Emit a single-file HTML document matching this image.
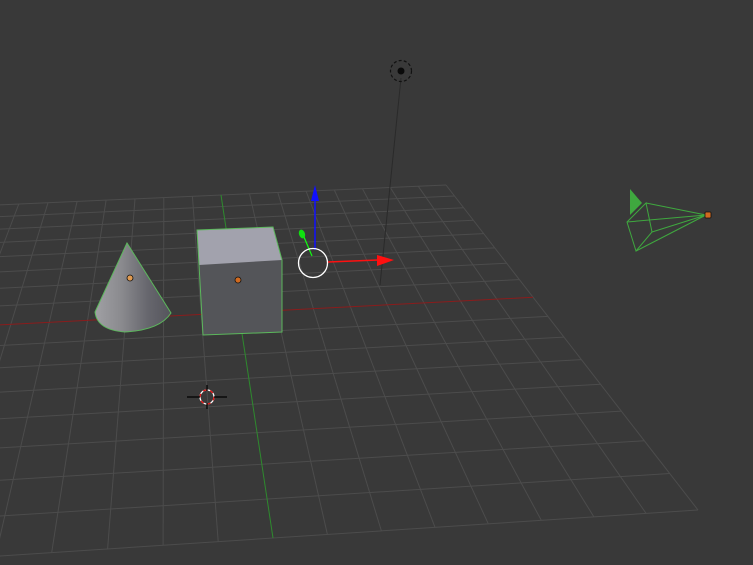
<!DOCTYPE html>
<html><head><meta charset="utf-8"><style>
html,body{margin:0;padding:0;background:#393939;width:753px;height:565px;overflow:hidden}
svg{display:block}
</style></head><body>
<svg id="s" width="753" height="565" viewBox="0 0 753 565" xmlns="http://www.w3.org/2000/svg">
<rect width="753" height="565" fill="#393939"/>
<g id="grid" stroke="#4c4c4c" stroke-width="1" fill="none"></g>
<g id="axes" fill="none"></g>
<!-- lamp line -->
<line x1="401" y1="78" x2="380" y2="285" stroke="#2a2a2a" stroke-width="1"/>
<!-- lamp -->
<circle cx="401" cy="71" r="10.5" fill="none" stroke="#111" stroke-width="1.2" stroke-dasharray="3,2.2"/>
<circle cx="401" cy="71" r="3.5" fill="#0a0a0a"/>
<!-- cone -->
<defs>
<linearGradient id="cg" x1="0" x2="1" y1="0" y2="0">
<stop offset="0" stop-color="#a0a0a4"/><stop offset="0.35" stop-color="#8a8a8e"/><stop offset="0.7" stop-color="#66666d"/><stop offset="1" stop-color="#55555c"/>
</linearGradient>
</defs>
<path d="M127,243 L95,312 Q97,330 125,332 Q160,330 171,313 Z" fill="url(#cg)" stroke="#5cb85c" stroke-width="1"/>
<circle cx="130" cy="278" r="3" fill="#e09a50" stroke="#111" stroke-width="0.8"/>
<!-- cube -->
<path d="M197,230 L273,227 L282,260 L282,332 L203,335 L199,265 Z" fill="#545559"/>
<path d="M197,230 L273,227 L282,260 L199,265 Z" fill="#a2a2ad"/>
<path d="M197,230 L273,227 L282,260 L282,332 L203,335 L199,265 Z" fill="none" stroke="#5cb85c" stroke-width="1"/>
<circle cx="238" cy="280" r="3" fill="#d06a20" stroke="#111" stroke-width="0.8"/>
<!-- manipulator -->
<line x1="315" y1="250" x2="315" y2="200" stroke="#1010ff" stroke-width="1.5"/>
<path d="M315,185 L311,201 L319,201 Z" fill="#1010ff"/>
<line x1="312" y1="256" x2="304" y2="237" stroke="#10ff10" stroke-width="1.2"/>
<ellipse cx="302" cy="234" rx="3" ry="4.5" fill="#10e010" transform="rotate(-20 302 234)"/>
<line x1="328" y1="262" x2="378" y2="260" stroke="#ff1010" stroke-width="1.5"/>
<path d="M394,260 L377,255 L377,266 Z" fill="#ff1010"/>
<circle cx="313" cy="263" r="14.5" fill="none" stroke="#fff" stroke-width="1.3"/>
<!-- camera -->
<g stroke="#3fa83f" stroke-width="1" fill="none">
<path d="M646,203 L627,222 L636,251 L652,232 Z"/>
<path d="M706,215 L646,203 M706,215 L627,222 M706,215 L636,251 M706,215 L652,232"/>
</g>
<path d="M630,189 L642,203 L630,215 Z" fill="#3fa83f"/>
<rect x="705" y="212" width="6" height="6" rx="1" fill="#d06a20" stroke="#111" stroke-width="0.8"/>
<!-- 3d cursor -->
<circle cx="207" cy="397" r="7" fill="none" stroke="#fff" stroke-width="1.3"/>
<circle cx="207" cy="397" r="7" fill="none" stroke="#e01010" stroke-width="1.3" stroke-dasharray="3.6,3.6"/>
<path d="M207,385 V391 M207,403 V409 M187,397 H200 M214,397 H227" stroke="#000" stroke-width="1.2"/>
</svg>
<script>
(function(){
var src=[[0,8],[0,-8],[8,8],[8,-8]],dst=[[221,195],[273,538],[446,185],[698,510]];
var A=[],b=[];
for(var i=0;i<4;i++){var x=src[i][0],y=src[i][1],u=dst[i][0],v=dst[i][1];
A.push([x,y,1,0,0,0,-u*x,-u*y]);b.push(u);
A.push([0,0,0,x,y,1,-v*x,-v*y]);b.push(v);}
var n=8;for(var c=0;c<n;c++){var p=c;for(var r=c+1;r<n;r++)if(Math.abs(A[r][c])>Math.abs(A[p][c]))p=r;
var t=A[c];A[c]=A[p];A[p]=t;t=b[c];b[c]=b[p];b[p]=t;
for(var r=0;r<n;r++)if(r!=c){var f=A[r][c]/A[c][c];for(var k=c;k<n;k++)A[r][k]-=f*A[c][k];b[r]-=f*b[c];}}
var h=[];for(var i=0;i<n;i++)h.push(b[i]/A[i][i]);
function P(x,y){var w=h[6]*x+h[7]*y+1;return[(h[0]*x+h[1]*y+h[2])/w,(h[3]*x+h[4]*y+h[5])/w];}
var g=document.getElementById('grid'),ax=document.getElementById('axes'),ns='http://www.w3.org/2000/svg';
function L(par,a,c,col,w){var e=document.createElementNS(ns,'line');e.setAttribute('x1',a[0].toFixed(1));e.setAttribute('y1',a[1].toFixed(1));e.setAttribute('x2',c[0].toFixed(1));e.setAttribute('y2',c[1].toFixed(1));if(col)e.setAttribute('stroke',col);if(w)e.setAttribute('stroke-width',w);par.appendChild(e);}
for(var i=-8;i<=8;i++){
if(i!=0){L(g,P(i,-8),P(i,8));L(g,P(-8,i),P(8,i));}
}
L(ax,P(-8,0),P(8,0),'#8a1c1c',1);
L(ax,P(0,-8),P(0,8),'#2e8a2e',1);
})();
</script>
</body></html>
